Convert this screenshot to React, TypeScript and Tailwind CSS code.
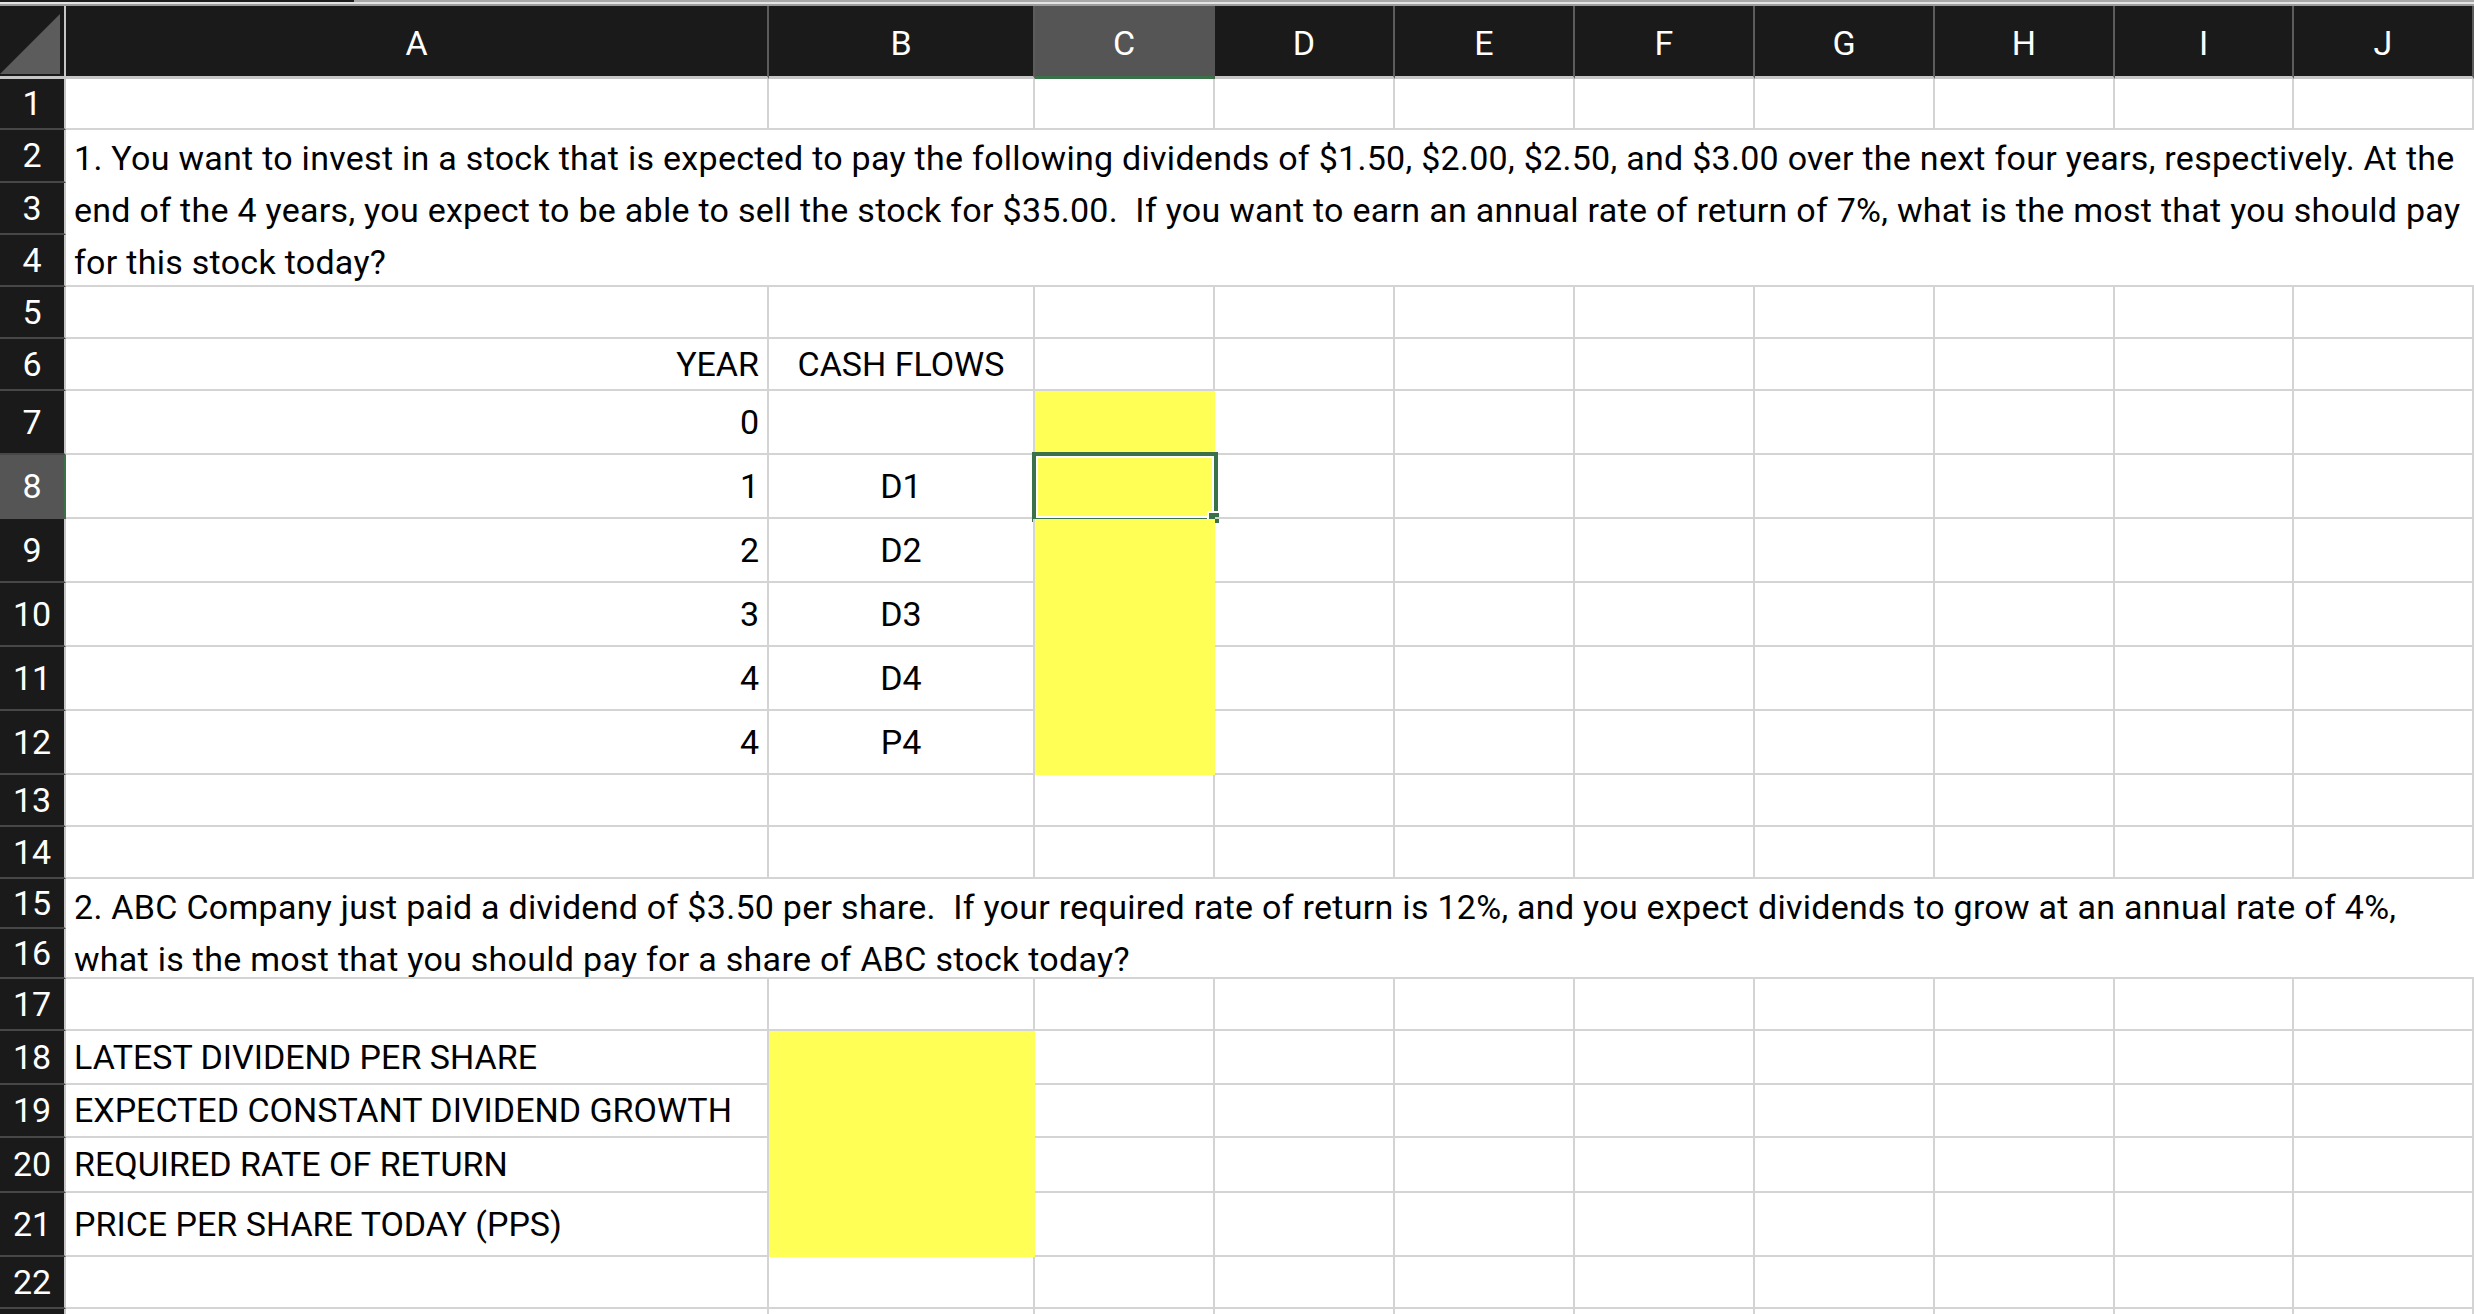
import React from 'react';

const COLS = ['A', 'B', 'C', 'D', 'E', 'F', 'G', 'H', 'I', 'J'];
// widths include the 2px gridline on the right
const WIDTHS = [
  'w-[703px]',
  'w-[266px]',
  'w-[180px]',
  'w-[180px]',
  'w-[180px]',
  'w-[180px]',
  'w-[180px]',
  'w-[180px]',
  'w-[179px]',
  'w-[180px]',
];

type Align = 'left' | 'right' | 'center';

interface CellSpec {
  text?: string;
  align?: Align;
  yellow?: boolean;
  selected?: boolean;
}

const RowHead = ({ n, h, active }: { n?: number; h: string; active?: boolean }) => (
  <div
    className={`${h} w-[66px] shrink-0 flex items-center justify-center text-white border-b-2 border-r-2 ${
      active ? 'bg-[#555555] border-b-[#555555] border-r-[#3b7149]' : 'bg-[#1a1a1a] border-b-[#474747] border-r-[#c6c6c6]'
    }`}
  >
    {n}
  </div>
);

const Cell = ({ w, h, text, align = 'left', yellow, selected }: CellSpec & { w: string; h: string }) => {
  const justify = align === 'right' ? 'justify-end' : align === 'center' ? 'justify-center' : 'justify-start';
  return (
    <div
      className={`relative shrink-0 ${w} ${h} flex items-center ${justify} px-[8px] border-r-2 border-b-2 ${
        yellow ? 'bg-[#ffff55] border-[#ffff55]' : 'border-[#d4d4d4]'
      }`}
    >
      {text && <span className="whitespace-pre">{text}</span>}
      {selected && (
        <>
          {/* selection frame */}
          <div className="absolute -left-[3px] -top-[3px] w-[186px] h-[70px] border-4 border-[#3b7149] shadow-[inset_0_0_0_2px_#ffffff]" />
          {/* fill handle */}
          <div className="absolute left-[172px] top-[56px] w-[14px] h-[14px] bg-[#3b7149] border-2 border-white" />
        </>
      )}
    </div>
  );
};

const GridRow = ({
  n,
  h,
  specs = {},
  active,
}: {
  n?: number;
  h: string;
  specs?: Record<number, CellSpec>;
  active?: boolean;
}) => (
  <div className="flex">
    <RowHead n={n} h={h} active={active} />
    {WIDTHS.map((w, i) => (
      <Cell key={i} w={w} h={h} {...(specs[i] ?? {})} />
    ))}
  </div>
);

// rows whose A..J cells are merged into one wrapped text block
const MergedRows = ({
  rows,
  total,
  lines,
}: {
  rows: { n: number; h: string }[];
  total: string;
  lines: string[];
}) => (
  <div className={`flex ${total}`}>
    <div className="flex flex-col">
      {rows.map((r) => (
        <RowHead key={r.n} n={r.n} h={r.h} />
      ))}
    </div>
    <div className={`flex-1 ${total} flex flex-col pt-[2px] px-[8px] border-b-2 border-[#d4d4d4] overflow-hidden`}>
      {lines.map((line, i) => (
        <div key={i} className="h-[52px] shrink-0 flex items-center whitespace-pre tracking-[0.28px]">
          {line}
        </div>
      ))}
    </div>
  </div>
);

export default function App() {
  const yellowC = { 2: { yellow: true } };

  return (
    <div className="w-[2474px] h-[1314px] overflow-hidden bg-white text-black text-[34px] font-['Roboto',sans-serif]">
      {/* window top edge */}
      <div className="h-[6px] flex flex-col">
        <div className="h-[2px] flex">
          <div className="w-[354px] bg-[#1e1e1e]" />
          <div className="flex-1 bg-[#a8a8a8]" />
        </div>
        <div className="h-[2px] bg-[#e4e4e4]" />
        <div className="h-[2px] bg-[#9c9c9c]" />
      </div>

      {/* column headers */}
      <div className="flex h-[73px]">
        <div className="w-[66px] shrink-0 bg-[#1a1a1a] border-r-2 border-b-[3px] border-[#c6c6c6]">
          <svg width="64" height="70" viewBox="0 0 64 70">
            <polygon points="0,68 60,8 60,68" fill="#5c5c5c" />
          </svg>
        </div>
        {COLS.map((c, i) => (
          <div
            key={c}
            className={`${WIDTHS[i]} shrink-0 flex items-center justify-center pt-[4px] text-white border-b-[3px] border-r-2 ${
              i === 2
                ? 'bg-[#555555] border-b-[#3b7149] border-r-[#555555]'
                : 'bg-[#1a1a1a] border-b-[#c6c6c6] border-r-[#5c5c5c]'
            }`}
          >
            {c}
          </div>
        ))}
      </div>

      <GridRow n={1} h="h-[51px]" />
      <MergedRows
        total="h-[157px]"
        rows={[
          { n: 2, h: 'h-[53px]' },
          { n: 3, h: 'h-[52px]' },
          { n: 4, h: 'h-[52px]' },
        ]}
        lines={[
          '1. You want to invest in a stock that is expected to pay the following dividends of $1.50, $2.00, $2.50, and $3.00 over the next four years, respectively. At the',
          'end of the 4 years, you expect to be able to sell the stock for $35.00.  If you want to earn an annual rate of return of 7%, what is the most that you should pay',
          'for this stock today?',
        ]}
      />
      <GridRow n={5} h="h-[52px]" />
      <GridRow
        n={6}
        h="h-[52px]"
        specs={{ 0: { text: 'YEAR', align: 'right' }, 1: { text: 'CASH FLOWS', align: 'center' } }}
      />
      <GridRow n={7} h="h-[64px]" specs={{ 0: { text: '0', align: 'right' }, ...yellowC }} />
      <GridRow
        n={8}
        h="h-[64px]"
        active
        specs={{
          0: { text: '1', align: 'right' },
          1: { text: 'D1', align: 'center' },
          2: { yellow: true, selected: true },
        }}
      />
      <GridRow
        n={9}
        h="h-[64px]"
        specs={{ 0: { text: '2', align: 'right' }, 1: { text: 'D2', align: 'center' }, ...yellowC }}
      />
      <GridRow
        n={10}
        h="h-[64px]"
        specs={{ 0: { text: '3', align: 'right' }, 1: { text: 'D3', align: 'center' }, ...yellowC }}
      />
      <GridRow
        n={11}
        h="h-[64px]"
        specs={{ 0: { text: '4', align: 'right' }, 1: { text: 'D4', align: 'center' }, ...yellowC }}
      />
      <GridRow
        n={12}
        h="h-[64px]"
        specs={{ 0: { text: '4', align: 'right' }, 1: { text: 'P4', align: 'center' }, ...yellowC }}
      />
      <GridRow n={13} h="h-[52px]" />
      <GridRow n={14} h="h-[52px]" />
      <MergedRows
        total="h-[100px]"
        rows={[
          { n: 15, h: 'h-[50px]' },
          { n: 16, h: 'h-[50px]' },
        ]}
        lines={[
          '2. ABC Company just paid a dividend of $3.50 per share.  If your required rate of return is 12%, and you expect dividends to grow at an annual rate of 4%,',
          'what is the most that you should pay for a share of ABC stock today?',
        ]}
      />
      <GridRow n={17} h="h-[52px]" />
      <GridRow n={18} h="h-[54px]" specs={{ 0: { text: 'LATEST DIVIDEND PER SHARE' }, 1: { yellow: true } }} />
      <GridRow
        n={19}
        h="h-[53px]"
        specs={{ 0: { text: 'EXPECTED CONSTANT DIVIDEND GROWTH' }, 1: { yellow: true } }}
      />
      <GridRow n={20} h="h-[55px]" specs={{ 0: { text: 'REQUIRED RATE OF RETURN' }, 1: { yellow: true } }} />
      <GridRow
        n={21}
        h="h-[64px]"
        specs={{ 0: { text: 'PRICE PER SHARE TODAY (PPS)' }, 1: { yellow: true } }}
      />
      <GridRow n={22} h="h-[52px]" />
      <GridRow h="h-[52px]" />
    </div>
  );
}
